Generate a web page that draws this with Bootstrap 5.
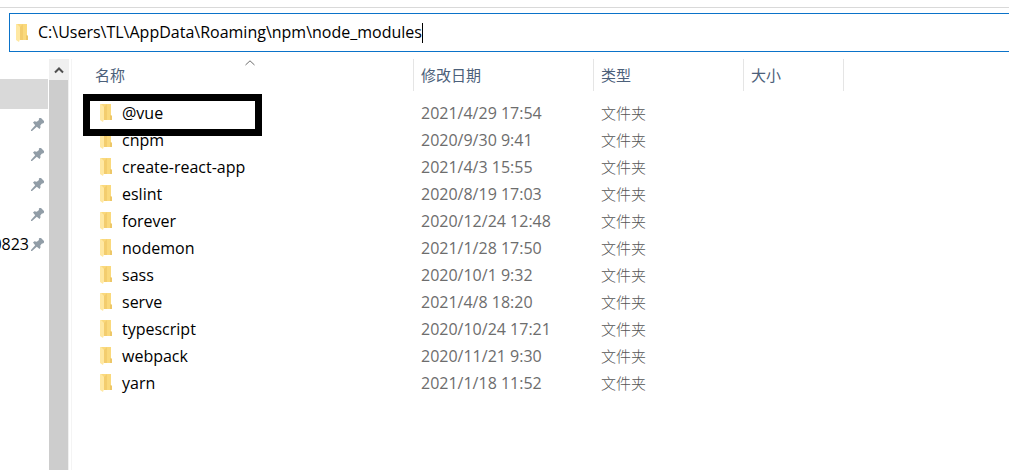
<!DOCTYPE html>
<html lang="zh-CN">
<head>
<meta charset="utf-8">
<meta name="viewport" content="width=device-width, initial-scale=1">
<title>node_modules</title>
<link href="https://cdn.jsdelivr.net/npm/bootstrap@5.3.0/dist/css/bootstrap.min.css" rel="stylesheet">
<style>
body { font-family: "Open Sans", "Noto Sans CJK SC", sans-serif; font-size: 16px; line-height: 20px; color: #000; background: #fff; }
.explorer { height: 100vh; }
.top-rule { height: 8px; border-bottom: 1px solid #d9d9d9; }
.address { height: 39px; margin: 5px 0 7px 9px; padding-left: 6px; border: 1px solid #0b73c9; border-right: 0; }
.address input { width: 384px; height: 24px; margin-left: 10px; padding: 0 0 2px; border: 0; outline: 0; font-size: 16px; color: #000; }
.text-caret { width: 1px; height: 20px; background: #000; }
.folder { width: 12px; height: 18px; display: block; flex: none; }
.side { width: 49px; padding-top: 20px; }
.side-item { height: 30px; padding-right: 5px; color: #000; gap: 2px; white-space: nowrap; }
.side-item.selected { background: #d9d9d9; margin-right: 1px; }
.pin { width: 13px; height: 13px; flex: none; }
.scroller { width: 20px; background: #f0f0f0; }
.scroller button { height: 21px; padding: 0; border: 0; background: #f0f0f0; }
.scroller .thumb { background: #cdcdcd; margin-right: 1px; }
.files { margin-left: 2px; border-left: 1px solid #f4f4f4; }
.file-table { width: 100%; table-layout: fixed; border-collapse: separate; border-spacing: 0; color: #6d6d6d; }
.file-table th { height: 40px; padding: 0; vertical-align: top; font-size: 15px; font-weight: 400; color: #4c607a; }
.file-table th > div { height: 32px; padding-left: 7px; border-right: 1px solid #e5e5e5; }
.file-table th:first-child > div { padding-left: 23px; }
.file-table td { height: 27px; padding: 0 0 0 7px; }
.file-table td:nth-child(3) { font-size: 15px; font-weight: 300; color: #555; }
.file-table td:first-child { padding-left: 28px; color: #000; }
.file-name { gap: 10px; }
.c-name { width: 342px; } .c-date { width: 180px; } .c-type { width: 150px; } .c-size { width: 100px; }
.sort { top: 1px; left: 173px; width: 10px; height: 6px; }
.frame { left: 11px; top: -5px; width: 179px; height: 42px; border: 7px solid #000; pointer-events: none; z-index: 2; }
</style>
</head>
<body>
<svg class="d-none" aria-hidden="true">
  <symbol id="i-folder" viewBox="0 0 12 18">
    <path d="M1 0H11V11L12 12V16H4L1 12Z" fill="#fad97c"/>
    <path d="M4 3L7 0V16H4Z" fill="#f3cd6e"/>
    <path d="M0 0H1L4 3V15L3 18L0 16Z" fill="#ffe8a2"/>
    <path d="M10 11L12 12V16H10Z" fill="#edc768"/>
  </symbol>
  <symbol id="i-pin" viewBox="0 0 13 13">
    <path d="M8.500 0H10L13 3V4.500L12 5.500L11 5.500L9.300 7.500L9.500 9.500L8.500 11L5.800 8.800L1 13H0V12L4.200 7.200L2 4.500L3.500 3.300L5.800 3.800L8 2L7.800 .8Z" fill="#919da7"/>
  </symbol>
</svg>
<div class="explorer d-flex flex-column overflow-hidden">
  <div class="top-rule flex-shrink-0"></div>
  <div class="address d-flex align-items-center flex-shrink-0">
    <svg class="folder"><use href="#i-folder"/></svg>
    <input type="text" aria-label="地址" value="C:\Users\TL\AppData\Roaming\npm\node_modules">
    <span class="text-caret"></span>
  </div>
  <main class="d-flex flex-grow-1 overflow-hidden">
    <nav class="side flex-shrink-0 overflow-hidden" aria-label="快速访问">
      <div class="side-item selected"></div>
      <div class="side-item d-flex align-items-center justify-content-end"><svg class="pin"><use href="#i-pin"/></svg></div>
      <div class="side-item d-flex align-items-center justify-content-end"><svg class="pin"><use href="#i-pin"/></svg></div>
      <div class="side-item d-flex align-items-center justify-content-end"><svg class="pin"><use href="#i-pin"/></svg></div>
      <div class="side-item d-flex align-items-center justify-content-end"><svg class="pin"><use href="#i-pin"/></svg></div>
      <div class="side-item d-flex align-items-center justify-content-end"><span>0823</span><svg class="pin"><use href="#i-pin"/></svg></div>
    </nav>
    <div class="scroller d-flex flex-column flex-shrink-0">
      <button type="button" aria-label="向上滚动" class="d-flex align-items-center justify-content-center"><svg width="10" height="8" viewBox="0 0 10 8"><path d="M1 6.5L5 2.5L9 6.5" fill="none" stroke="#505050" stroke-width="2"/></svg></button>
      <div class="thumb flex-grow-1"></div>
    </div>
    <section class="files flex-grow-1">
      <table class="file-table">
        <colgroup><col class="c-name"><col class="c-date"><col class="c-type"><col class="c-size"><col></colgroup>
        <thead><tr>
          <th scope="col"><div class="position-relative d-flex align-items-center">名称<svg class="sort position-absolute" viewBox="0 0 10 6"><path d="M.5 5L5 .8L9.5 5" fill="none" stroke="#6d6d6d"/></svg></div></th>
          <th scope="col"><div class="d-flex align-items-center">修改日期</div></th>
          <th scope="col"><div class="d-flex align-items-center">类型</div></th>
          <th scope="col"><div class="d-flex align-items-center">大小</div></th>
          <td></td>
        </tr></thead>
        <tbody>
          <tr><td class="position-relative"><div class="file-name d-flex align-items-center"><svg class="folder"><use href="#i-folder"/></svg>@vue</div><div class="frame position-absolute"></div></td><td>2021/4/29 17:54</td><td>文件夹</td><td></td><td></td></tr>
          <tr><td><div class="file-name d-flex align-items-center"><svg class="folder"><use href="#i-folder"/></svg>cnpm</div></td><td>2020/9/30 9:41</td><td>文件夹</td><td></td><td></td></tr>
          <tr><td><div class="file-name d-flex align-items-center"><svg class="folder"><use href="#i-folder"/></svg>create-react-app</div></td><td>2021/4/3 15:55</td><td>文件夹</td><td></td><td></td></tr>
          <tr><td><div class="file-name d-flex align-items-center"><svg class="folder"><use href="#i-folder"/></svg>eslint</div></td><td>2020/8/19 17:03</td><td>文件夹</td><td></td><td></td></tr>
          <tr><td><div class="file-name d-flex align-items-center"><svg class="folder"><use href="#i-folder"/></svg>forever</div></td><td>2020/12/24 12:48</td><td>文件夹</td><td></td><td></td></tr>
          <tr><td><div class="file-name d-flex align-items-center"><svg class="folder"><use href="#i-folder"/></svg>nodemon</div></td><td>2021/1/28 17:50</td><td>文件夹</td><td></td><td></td></tr>
          <tr><td><div class="file-name d-flex align-items-center"><svg class="folder"><use href="#i-folder"/></svg>sass</div></td><td>2020/10/1 9:32</td><td>文件夹</td><td></td><td></td></tr>
          <tr><td><div class="file-name d-flex align-items-center"><svg class="folder"><use href="#i-folder"/></svg>serve</div></td><td>2021/4/8 18:20</td><td>文件夹</td><td></td><td></td></tr>
          <tr><td><div class="file-name d-flex align-items-center"><svg class="folder"><use href="#i-folder"/></svg>typescript</div></td><td>2020/10/24 17:21</td><td>文件夹</td><td></td><td></td></tr>
          <tr><td><div class="file-name d-flex align-items-center"><svg class="folder"><use href="#i-folder"/></svg>webpack</div></td><td>2020/11/21 9:30</td><td>文件夹</td><td></td><td></td></tr>
          <tr><td><div class="file-name d-flex align-items-center"><svg class="folder"><use href="#i-folder"/></svg>yarn</div></td><td>2021/1/18 11:52</td><td>文件夹</td><td></td><td></td></tr>
        </tbody>
      </table>
    </section>
  </main>
</div>
<script src="https://cdn.jsdelivr.net/npm/bootstrap@5.3.0/dist/js/bootstrap.bundle.min.js"></script>
</body>
</html>
